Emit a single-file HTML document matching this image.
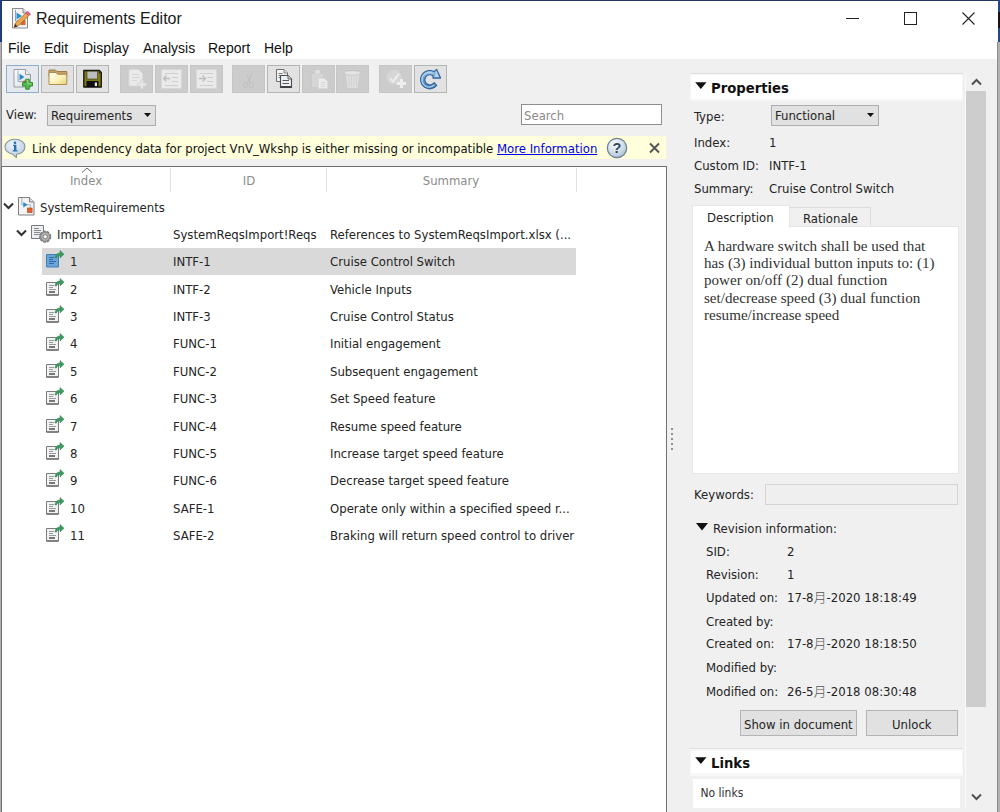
<!DOCTYPE html>
<html><head><meta charset="utf-8"><title>Requirements Editor</title>
<style>
*{box-sizing:border-box;margin:0;padding:0}
html,body{width:1000px;height:812px;overflow:hidden;background:#f0f0f0}
body{position:relative;font-family:"DejaVu Sans Condensed","Liberation Sans",sans-serif;font-size:13px;color:#242424;}
.a{position:absolute;white-space:nowrap}
.t{position:absolute;white-space:nowrap;line-height:16px;height:16px}
#titlebar{left:0;top:0;width:998px;height:59px;background:#fff}
.seg{font-family:"Liberation Sans",sans-serif}
.tb{position:absolute;top:65px;width:33px;height:28px;border:1px solid #b4b4b4;background:#e2e2e2}
.tb.d{background:#cccccc;border-color:#c6c6c6}
.tb.f{background:#e5e9ed;border-color:#8eaecb}
.combo{position:absolute;border:1px solid #adadad;background:#e1e1e1;height:21px}
#tree{left:1px;top:166px;width:666px;height:650px;background:#fff;border:1px solid #707070}
.hd{color:#8c8c8c}
.sep{position:absolute;top:168px;width:1px;height:24px;background:#e3e3e3}
.serif{font-family:"Liberation Serif",serif}
</style></head><body>
<div class="a" id="titlebar"></div>
<div class="a" style="left:0;top:0;width:1000px;height:1px;background:#24365f"></div>
<div class="a" style="left:997px;top:42px;width:1px;height:770px;background:#8c8c8c"></div>
<div class="a" style="left:998px;top:42px;width:2px;height:770px;background:#b2b2b2"></div>
<div class="a" style="left:998px;top:0;width:2px;height:42px;background:#1e4a8c"></div>
<div class="a" style="left:998px;top:12px;width:2px;height:16px;background:#1a1010"></div>
<div class="a" style="left:0;top:1px;width:1px;height:811px;background:#b0b0b0"></div>
<div class="a" style="left:0;top:0;width:2px;height:42px;background:#1e3c78"></div>
<div class="a" style="left:1px;top:42px;width:1px;height:124px;background:#8a8a8a"></div>
<svg class="a" style="left:11px;top:7px" width="21" height="22" viewBox="0 0 21 22">
<path d="M1.500 1.500h10.500l4.500 4.500v15h-15z" fill="#f6f6f6" stroke="#8a8a8a"/>
<path d="M12 1.500v4.500h4.500" fill="#dcdcdc" stroke="#8a8a8a"/>
<path d="M5.500 5.500l5.500 3.500-5.500 3.500z" fill="#2f8fd4"/>
<path d="M4.500 3v11h3" fill="none" stroke="#7fa3c8" stroke-width="1"/>
<rect x="9.500" y="13" width="5" height="5" fill="#e0602e"/>
<path d="M3.200 20.300l1.200-4.300 10.500-10 2.900 2.800-10.500 10z" fill="#e8a850" stroke="#a06a28" stroke-width=".8"/>
<path d="M14.900 6l1.800-1.700 2.900 2.800-1.800 1.700z" fill="#e8609a" stroke="#b84a78" stroke-width=".6"/>
<path d="M3.200 20.300l.9-3.200 2.400 2.300z" fill="#3a2a1a"/>
</svg>
<div class="t seg" style="left:36px;top:9px;font-size:16px;line-height:20px;height:20px;color:#1a1a1a">Requirements Editor</div>
<svg class="a" style="left:840px;top:6px" width="150" height="26" viewBox="0 0 150 26">
<path d="M6 12.500h13" stroke="#222" stroke-width="1"/>
<rect x="64.500" y="6.500" width="12" height="12" fill="none" stroke="#222" stroke-width="1"/>
<path d="M122.500 6.500l12 12M134.500 6.500l-12 12" stroke="#222" stroke-width="1.100"/>
</svg>
<div class="t seg" style="left:8px;top:40px;font-size:14px;color:#111">File</div>
<div class="t seg" style="left:44px;top:40px;font-size:14px;color:#111">Edit</div>
<div class="t seg" style="left:83px;top:40px;font-size:14px;color:#111">Display</div>
<div class="t seg" style="left:143px;top:40px;font-size:14px;color:#111">Analysis</div>
<div class="t seg" style="left:208px;top:40px;font-size:14px;color:#111">Report</div>
<div class="t seg" style="left:264px;top:40px;font-size:14px;color:#111">Help</div>
<div class="tb f" style="left:6px"><svg width="31" height="26" viewBox="0 0 31 26" style="position:absolute;left:0;top:0"><defs><linearGradient id="gpg" x1="0" y1="0" x2="1" y2="1"><stop offset="0" stop-color="#fff"/><stop offset="1" stop-color="#d4dae0"/></linearGradient></defs>
<path d="M7 3.500h11.500l5 5v12.500h-16.500z" fill="url(#gpg)" stroke="#9a9ea3"/>
<path d="M18.500 3.500v5h5" fill="#eceff2" stroke="#9a9ea3"/>
<path d="M12.500 7.800l5 3.200-5 3.200z" fill="#2b87cf"/>
<path d="M11 4.500v11h6.500v2" fill="none" stroke="#8fa9c4" stroke-width="1"/>
<rect x="16.500" y="14.500" width="2.500" height="2.500" fill="#d9582b"/>
<path d="M15.500 16.500h3.200v-3.200h3.600v3.200h3.200v3.600h-3.200v3.200h-3.600v-3.200h-3.200z" fill="#52bb4c" stroke="#2f8a2d" stroke-width=".9" stroke-linejoin="round"/>
<path d="M19.500 14.500h1.200v3.200h3v1" fill="none" stroke="#a6e09f" stroke-width=".8"/></svg></div>
<div class="tb " style="left:41px"><svg width="31" height="26" viewBox="0 0 31 26" style="position:absolute;left:0;top:0"><defs><linearGradient id="gfo" x1="0" y1="0" x2="1" y2="1"><stop offset="0" stop-color="#fffff4"/><stop offset=".55" stop-color="#fbf2b8"/><stop offset="1" stop-color="#e6cf7c"/></linearGradient></defs>
<path d="M7 4h6.500l1.500 1.500h9.800v5h-17.800z" fill="#c4a264" stroke="#9c7e45" stroke-width="1" stroke-linejoin="round"/>
<path d="M7 6.500h7l1.500 1.800h9.300v10.200h-17.800z" fill="url(#gfo)" stroke="#b08d4e" stroke-width="1" stroke-linejoin="round"/></svg></div>
<div class="tb " style="left:76px"><svg width="31" height="26" viewBox="0 0 31 26" style="position:absolute;left:0;top:0"><path d="M6.800 4.500h15.500l2 2v14.500h-17.500z" fill="#7d7a12" stroke="#15150c" stroke-width="1.300" stroke-linejoin="round"/>
<rect x="10" y="5.200" width="10.500" height="7.800" fill="#bdbdbd" stroke="#3a3a20" stroke-width=".6"/>
<rect x="9.500" y="15" width="12" height="6" fill="#0d0d0d"/>
<rect x="17.800" y="16.500" width="2.200" height="3.600" fill="#e8e8e8"/>
<rect x="22" y="6" width="1.200" height="1.500" fill="#222"/></svg></div>
<div class="tb d" style="left:120px"><svg width="31" height="26" viewBox="0 0 31 26" style="position:absolute;left:0;top:0"><path d="M8 3.500h9.500l4 4v12.500h-13.500z" fill="#eaeaea" stroke="#d8d8d8" stroke-width=".8"/>
<path d="M11 8.500h7M11 11.500h8M11 14.500h5" stroke="#d6d6d6" stroke-width="1"/>
<path d="M16.500 17h3v-3h3v3h3v3h-3v3h-3v-3h-3z" fill="#e6e6e6" stroke="#cacaca" stroke-width=".5"/></svg></div>
<div class="tb d" style="left:155px"><svg width="31" height="26" viewBox="0 0 31 26" style="position:absolute;left:0;top:0"><rect x="5.500" y="3.500" width="20" height="19" fill="#eaeaea" stroke="#d8d8d8" stroke-width=".8"/>
<path d="M9 7.500h13M16 11.500h6M16 15.500h6M9 19.500h13" stroke="#cfcfcf" stroke-width="1"/>
<path d="M14 12.500h-6M10.500 9.500l-3 3 3 3" stroke="#bdbdbd" stroke-width="1.300" fill="none"/></svg></div>
<div class="tb d" style="left:190px"><svg width="31" height="26" viewBox="0 0 31 26" style="position:absolute;left:0;top:0"><rect x="5.500" y="3.500" width="20" height="19" fill="#eaeaea" stroke="#d8d8d8" stroke-width=".8"/>
<path d="M9 7.500h13M16 11.500h6M16 15.500h6M9 19.500h13" stroke="#cfcfcf" stroke-width="1"/>
<path d="M8 12.500h6M11.500 9.500l3 3-3 3" stroke="#bdbdbd" stroke-width="1.300" fill="none"/></svg></div>
<div class="tb d" style="left:232px"><svg width="31" height="26" viewBox="0 0 31 26" style="position:absolute;left:0;top:0"><path d="M19.500 5.500l-5 12M14 9l3 8" stroke="#c0c0c0" stroke-width="1" fill="none"/>
<ellipse cx="12.500" cy="19" rx="2" ry="2.800" fill="none" stroke="#c0c0c0" stroke-width="1"/>
<ellipse cx="18.500" cy="19" rx="2" ry="2.800" fill="none" stroke="#c0c0c0" stroke-width="1"/></svg></div>
<div class="tb " style="left:267px"><svg width="31" height="26" viewBox="0 0 31 26" style="position:absolute;left:0;top:0"><path d="M8.500 3.500h7.500l3.500 3.500v8.500h-11z" fill="#f4f4f4" stroke="#6e6e6e" stroke-width="1"/>
<path d="M16 3.500v3.500h3.500" fill="#ddd" stroke="#6e6e6e" stroke-width=".8"/>
<path d="M10.500 7.500h4M10.500 9.500h5M10.500 11.500h3" stroke="#777" stroke-width="1"/>
<path d="M12.500 9.500h7.500l3.500 3.500v8.500h-11z" fill="#eaf0f4" stroke="#4c4c4c" stroke-width="1.100"/>
<path d="M20 9.500v3.500h3.500" fill="#d8d8d8" stroke="#4c4c4c" stroke-width=".8"/>
<path d="M14.500 14.500h6.500M14.500 17.500h6.500" stroke="#5a5a5a" stroke-width="1.200"/>
<path d="M13 20.800h10" stroke="#333" stroke-width="1.400"/></svg></div>
<div class="tb d" style="left:302px"><svg width="31" height="26" viewBox="0 0 31 26" style="position:absolute;left:0;top:0"><path d="M8.500 7.500h12v14h-12z" fill="#d6d6d6" stroke="#c8c8c8" stroke-width=".8"/>
<path d="M12 4h5v4h-5z" fill="#e2e2e2" stroke="#d0d0d0" stroke-width=".6"/>
<path d="M15.500 12.500h6l3 3v7h-9z" fill="#ececec" stroke="#d8d8d8" stroke-width=".7"/>
<path d="M17.500 16.500h5M17.500 18.500h5M17.500 20.500h5" stroke="#d4d4d4" stroke-width=".8"/></svg></div>
<div class="tb d" style="left:336px"><svg width="31" height="26" viewBox="0 0 31 26" style="position:absolute;left:0;top:0"><path d="M8 7.500c0-2 15-2 15 0l-2 15h-11z" fill="#dedede" stroke="#c6c6c6" stroke-width=".8"/>
<ellipse cx="15.500" cy="7" rx="8.500" ry="2.300" fill="#e4e4e4" stroke="#c2c2c2" stroke-width=".8"/>
<path d="M12 10.500v10M14.500 10.500v10M17 10.500v10M19.500 10.500v10" stroke="#cfcfcf" stroke-width=".9"/></svg></div>
<div class="tb d" style="left:379px"><svg width="31" height="26" viewBox="0 0 31 26" style="position:absolute;left:0;top:0"><circle cx="14" cy="11" r="7.500" fill="#d6d6d6"/>
<path d="M10 12.500l3 3.200 6-8" stroke="#ececec" stroke-width="2" fill="none"/>
<path d="M18 17h3v-3h3v3h3v3h-3v3h-3v-3h-3z" transform="translate(-1,-1)" fill="#efefef"/></svg></div>
<div class="tb " style="left:414px"><svg width="31" height="26" viewBox="0 0 31 26" style="position:absolute;left:0;top:0"><g transform="translate(.6,0)"><defs><linearGradient id="grf" x1="0" y1="0" x2="0" y2="1"><stop offset="0" stop-color="#a3c8e8"/><stop offset=".6" stop-color="#5f97cc"/><stop offset="1" stop-color="#3a72ae"/></linearGradient></defs>
<path d="M18.500 5.600A9.200 9.200 0 1 0 21.250 19.500L18.600 16.600A5.100 5.100 0 1 1 17.400 9.770L17.400 12.100L25 12.100L21 3.300Z" fill="url(#grf)" stroke="#2f619a" stroke-width="1.100" stroke-linejoin="round"/>
<path d="M17 7.300A7.300 7.300 0 1 0 18.800 18.800" fill="none" stroke="#bcd9f0" stroke-width="1.300" opacity=".85"/>
<path d="M20.700 5.500l2.700 5.600h-4.500z" fill="#c4dff3" opacity=".8"/></g></svg></div>
<div class="t" style="left:6px;top:107.2px;">View:</div>
<div class="combo" style="left:47px;top:105px;width:109px"><div class="t" style="left:3px;top:1.500px">Requirements</div><svg class="a" style="right:4px;top:7px" width="7" height="4"><path d="M0 0h7l-3.500 4z" fill="#111"/></svg></div>
<div class="a" style="left:521px;top:104px;width:141px;height:21px;background:#fff;border:1px solid #8e8e8e"><div class="t" style="left:2px;top:2.600px;color:#8a8a8a">Search</div></div>
<div class="a" style="left:3px;top:136px;width:662.500px;height:23px;background:#ffffdc"></div>
<svg class="a" style="left:4px;top:138px" width="22" height="21" viewBox="0 0 22 21">
<defs><radialGradient id="ginf" cx=".4" cy=".3" r=".8"><stop offset="0" stop-color="#f0f5fa"/><stop offset="1" stop-color="#b4c9dc"/></radialGradient></defs>
<path d="M11 1.200c5.600 0 10 3.300 10 7.600 0 3.900-3.600 6.900-8.300 7.500l-.3 3.300-3.400-3.300c-4.600-.7-8-3.700-8-7.500 0-4.300 4.400-7.600 10-7.600z" fill="url(#ginf)" stroke="#86939f" stroke-width="1.100" stroke-linejoin="round"/>
<circle cx="11" cy="4.800" r="1.350" fill="#2a70b8"/>
<path d="M9 6.800h3.400v5.400h1.200v1.200h-5v-1.200h1.400v-4.200h-1z" fill="#2a70b8"/>
</svg>
<div class="t" style="left:32px;top:140.9px;color:#111">Link dependency data for project VnV_Wkshp is either missing or incompatible <span style="color:#0000ee;text-decoration:underline">More Information</span></div>
<svg class="a" style="left:606px;top:137px" width="22" height="22" viewBox="0 0 22 22">
<defs><radialGradient id="ghlp" cx=".4" cy=".3" r=".8"><stop offset="0" stop-color="#fbfdff"/><stop offset=".7" stop-color="#c3d3e3"/><stop offset="1" stop-color="#8ea6c0"/></radialGradient></defs>
<circle cx="11" cy="11" r="9.700" fill="url(#ghlp)" stroke="#6f8196" stroke-width="1.200"/>
<text x="11" y="16.200" text-anchor="middle" font-family="Liberation Sans, sans-serif" font-weight="bold" font-size="14.500" fill="#33475c">?</text>
</svg>
<svg class="a" style="left:648px;top:142px" width="13" height="12" viewBox="0 0 13 12"><path d="M2 1.500l9 9M11 1.500l-9 9" stroke="#555" stroke-width="2"/></svg>
<div class="a" id="tree"></div>
<div class="sep" style="left:170px"></div><div class="sep" style="left:326px"></div><div class="sep" style="left:576px"></div>
<svg class="a" style="left:81px;top:167px" width="12" height="6" viewBox="0 0 12 6"><path d="M1 5.500l5-4.500 5 4.500" fill="none" stroke="#6a6a6a" stroke-width="1"/></svg>
<div class="t hd" style="left:36px;width:100px;text-align:center;top:172.9px">Index</div>
<div class="t hd" style="left:199px;width:100px;text-align:center;top:172.9px">ID</div>
<div class="t hd" style="left:401px;width:100px;text-align:center;top:172.9px">Summary</div>
<div class="a" style="left:42px;top:247.500px;width:534px;height:27px;background:#d9d9d9"></div>
<svg class="a" style="left:3px;top:202px" width="11" height="8" viewBox="0 0 11 8"><path d="M1 1.500l4.500 4.500 4.500-4.500" fill="none" stroke="#333" stroke-width="2.100"/></svg>
<svg class="a" style="left:17px;top:196px" width="20" height="20" viewBox="0 0 20 20">
<path d="M1.500 1.500h11l4.500 4.500v13h-15.500z" fill="#f3f3f3" stroke="#7f7f7f"/><path d="M12.500 1.500v4.500h4.500" fill="#dedede" stroke="#7f7f7f"/>
<path d="M4.800 2v6.800h8.500v3.500" fill="none" stroke="#9fb2c6" stroke-width="1"/>
<path d="M6.300 6l4.200 2.700-4.200 2.700z" fill="#2b87cf"/>
<rect x="10.500" y="12" width="4.600" height="4.600" fill="#e0602e" stroke="#b3401a" stroke-width=".6"/></svg>
<div class="t" style="left:40px;top:199.6px;">SystemRequirements</div>
<svg class="a" style="left:16px;top:229px" width="11" height="8" viewBox="0 0 11 8"><path d="M1 1.500l4.500 4.500 4.500-4.500" fill="none" stroke="#333" stroke-width="2.100"/></svg>
<svg class="a" style="left:31px;top:224px" width="22" height="20" viewBox="0 0 22 20">
<path d="M.5 1.500h12v13h-12z" fill="#eceff1" stroke="#7a7a7a"/><path d="M3 4.500h5M3 6.500h7M3 8.500h6M3 10.500h7" stroke="#8a8a8a" stroke-width="1"/>
<circle cx="14.200" cy="12.700" r="5.300" fill="#b4b4b4" stroke="#7c7c7c" stroke-width="1.600" stroke-dasharray="2.600 1.100"/>
<circle cx="14.200" cy="12.700" r="4.700" fill="#b0b0b0" stroke="#808080" stroke-width="1"/><circle cx="14.200" cy="12.700" r="2.100" fill="#f6f6f6" stroke="#777" stroke-width=".9"/></svg>
<div class="t" style="left:57px;top:226.97px;">Import1</div>
<div class="t" style="left:173px;top:226.97px;">SystemReqsImport!Reqs</div>
<div class="t" style="left:330px;top:226.97px;">References to SystemReqsImport.xlsx (...</div>
<svg class="a" style="left:46px;top:250px" width="19" height="18" viewBox="0 0 19 18"><path d="M.5 4.500h12v12.500h-12z" fill="#6aa5d8" stroke="#3f7fb8"/><path d="M3 7.500h5M3 9.500h4M3 11.500h7M3 13.500h5" stroke="#2f6aa3" stroke-width="1"/><path d="M9 8c.3-3.500 2.300-5 5-5v-2.500l4 3.700-4 3.700v-2.500c-1.800 0-3 .8-3.500 2.600z" fill="#3c9a5f" stroke="#2e8050" stroke-width=".5"/></svg>
<div class="t" style="left:70px;top:254.34px;">1</div>
<div class="t" style="left:173px;top:254.34px;">INTF-1</div>
<div class="t" style="left:330px;top:254.34px;">Cruise Control Switch</div>
<svg class="a" style="left:46px;top:278px" width="19" height="18" viewBox="0 0 19 18"><path d="M.5 4.500h12v12.500h-12z" fill="#f0f2f4" stroke="#7c7c7c"/><path d="M.5 17h12" stroke="#4a4a4a"/><path d="M3 7.500h5M3 9.500h4M3 11.500h7" stroke="#9a9a9a" stroke-width="1"/><path d="M3 14h6" stroke="#444" stroke-width="1.400"/><path d="M9 8c.3-3.500 2.300-5 5-5v-2.500l4 3.700-4 3.700v-2.500c-1.800 0-3 .8-3.500 2.600z" fill="#3c9a5f" stroke="#2e8050" stroke-width=".5"/></svg>
<div class="t" style="left:70px;top:281.71px;">2</div>
<div class="t" style="left:173px;top:281.71px;">INTF-2</div>
<div class="t" style="left:330px;top:281.71px;">Vehicle Inputs</div>
<svg class="a" style="left:46px;top:305px" width="19" height="18" viewBox="0 0 19 18"><path d="M.5 4.500h12v12.500h-12z" fill="#f0f2f4" stroke="#7c7c7c"/><path d="M.5 17h12" stroke="#4a4a4a"/><path d="M3 7.500h5M3 9.500h4M3 11.500h7" stroke="#9a9a9a" stroke-width="1"/><path d="M3 14h6" stroke="#444" stroke-width="1.400"/><path d="M9 8c.3-3.500 2.300-5 5-5v-2.500l4 3.700-4 3.700v-2.500c-1.800 0-3 .8-3.500 2.600z" fill="#3c9a5f" stroke="#2e8050" stroke-width=".5"/></svg>
<div class="t" style="left:70px;top:309.08px;">3</div>
<div class="t" style="left:173px;top:309.08px;">INTF-3</div>
<div class="t" style="left:330px;top:309.08px;">Cruise Control Status</div>
<svg class="a" style="left:46px;top:333px" width="19" height="18" viewBox="0 0 19 18"><path d="M.5 4.500h12v12.500h-12z" fill="#f0f2f4" stroke="#7c7c7c"/><path d="M.5 17h12" stroke="#4a4a4a"/><path d="M3 7.500h5M3 9.500h4M3 11.500h7" stroke="#9a9a9a" stroke-width="1"/><path d="M3 14h6" stroke="#444" stroke-width="1.400"/><path d="M9 8c.3-3.500 2.300-5 5-5v-2.500l4 3.700-4 3.700v-2.500c-1.800 0-3 .8-3.500 2.600z" fill="#3c9a5f" stroke="#2e8050" stroke-width=".5"/></svg>
<div class="t" style="left:70px;top:336.45px;">4</div>
<div class="t" style="left:173px;top:336.45px;">FUNC-1</div>
<div class="t" style="left:330px;top:336.45px;">Initial engagement</div>
<svg class="a" style="left:46px;top:360px" width="19" height="18" viewBox="0 0 19 18"><path d="M.5 4.500h12v12.500h-12z" fill="#f0f2f4" stroke="#7c7c7c"/><path d="M.5 17h12" stroke="#4a4a4a"/><path d="M3 7.500h5M3 9.500h4M3 11.500h7" stroke="#9a9a9a" stroke-width="1"/><path d="M3 14h6" stroke="#444" stroke-width="1.400"/><path d="M9 8c.3-3.500 2.300-5 5-5v-2.500l4 3.700-4 3.700v-2.500c-1.800 0-3 .8-3.500 2.600z" fill="#3c9a5f" stroke="#2e8050" stroke-width=".5"/></svg>
<div class="t" style="left:70px;top:363.82px;">5</div>
<div class="t" style="left:173px;top:363.82px;">FUNC-2</div>
<div class="t" style="left:330px;top:363.82px;">Subsequent engagement</div>
<svg class="a" style="left:46px;top:387px" width="19" height="18" viewBox="0 0 19 18"><path d="M.5 4.500h12v12.500h-12z" fill="#f0f2f4" stroke="#7c7c7c"/><path d="M.5 17h12" stroke="#4a4a4a"/><path d="M3 7.500h5M3 9.500h4M3 11.500h7" stroke="#9a9a9a" stroke-width="1"/><path d="M3 14h6" stroke="#444" stroke-width="1.400"/><path d="M9 8c.3-3.500 2.300-5 5-5v-2.500l4 3.700-4 3.700v-2.500c-1.800 0-3 .8-3.500 2.600z" fill="#3c9a5f" stroke="#2e8050" stroke-width=".5"/></svg>
<div class="t" style="left:70px;top:391.19px;">6</div>
<div class="t" style="left:173px;top:391.19px;">FUNC-3</div>
<div class="t" style="left:330px;top:391.19px;">Set Speed feature</div>
<svg class="a" style="left:46px;top:415px" width="19" height="18" viewBox="0 0 19 18"><path d="M.5 4.500h12v12.500h-12z" fill="#f0f2f4" stroke="#7c7c7c"/><path d="M.5 17h12" stroke="#4a4a4a"/><path d="M3 7.500h5M3 9.500h4M3 11.500h7" stroke="#9a9a9a" stroke-width="1"/><path d="M3 14h6" stroke="#444" stroke-width="1.400"/><path d="M9 8c.3-3.500 2.300-5 5-5v-2.500l4 3.700-4 3.700v-2.500c-1.800 0-3 .8-3.500 2.600z" fill="#3c9a5f" stroke="#2e8050" stroke-width=".5"/></svg>
<div class="t" style="left:70px;top:418.56px;">7</div>
<div class="t" style="left:173px;top:418.56px;">FUNC-4</div>
<div class="t" style="left:330px;top:418.56px;">Resume speed feature</div>
<svg class="a" style="left:46px;top:442px" width="19" height="18" viewBox="0 0 19 18"><path d="M.5 4.500h12v12.500h-12z" fill="#f0f2f4" stroke="#7c7c7c"/><path d="M.5 17h12" stroke="#4a4a4a"/><path d="M3 7.500h5M3 9.500h4M3 11.500h7" stroke="#9a9a9a" stroke-width="1"/><path d="M3 14h6" stroke="#444" stroke-width="1.400"/><path d="M9 8c.3-3.500 2.300-5 5-5v-2.500l4 3.700-4 3.700v-2.500c-1.800 0-3 .8-3.500 2.600z" fill="#3c9a5f" stroke="#2e8050" stroke-width=".5"/></svg>
<div class="t" style="left:70px;top:445.93px;">8</div>
<div class="t" style="left:173px;top:445.93px;">FUNC-5</div>
<div class="t" style="left:330px;top:445.93px;">Increase target speed feature</div>
<svg class="a" style="left:46px;top:469px" width="19" height="18" viewBox="0 0 19 18"><path d="M.5 4.500h12v12.500h-12z" fill="#f0f2f4" stroke="#7c7c7c"/><path d="M.5 17h12" stroke="#4a4a4a"/><path d="M3 7.500h5M3 9.500h4M3 11.500h7" stroke="#9a9a9a" stroke-width="1"/><path d="M3 14h6" stroke="#444" stroke-width="1.400"/><path d="M9 8c.3-3.500 2.300-5 5-5v-2.500l4 3.700-4 3.700v-2.500c-1.800 0-3 .8-3.500 2.600z" fill="#3c9a5f" stroke="#2e8050" stroke-width=".5"/></svg>
<div class="t" style="left:70px;top:473.3px;">9</div>
<div class="t" style="left:173px;top:473.3px;">FUNC-6</div>
<div class="t" style="left:330px;top:473.3px;">Decrease target speed feature</div>
<svg class="a" style="left:46px;top:497px" width="19" height="18" viewBox="0 0 19 18"><path d="M.5 4.500h12v12.500h-12z" fill="#f0f2f4" stroke="#7c7c7c"/><path d="M.5 17h12" stroke="#4a4a4a"/><path d="M3 7.500h5M3 9.500h4M3 11.500h7" stroke="#9a9a9a" stroke-width="1"/><path d="M3 14h6" stroke="#444" stroke-width="1.400"/><path d="M9 8c.3-3.500 2.300-5 5-5v-2.500l4 3.700-4 3.700v-2.500c-1.800 0-3 .8-3.500 2.600z" fill="#3c9a5f" stroke="#2e8050" stroke-width=".5"/></svg>
<div class="t" style="left:70px;top:500.67px;">10</div>
<div class="t" style="left:173px;top:500.67px;">SAFE-1</div>
<div class="t" style="left:330px;top:500.67px;">Operate only within a specified speed r...</div>
<svg class="a" style="left:46px;top:524px" width="19" height="18" viewBox="0 0 19 18"><path d="M.5 4.500h12v12.500h-12z" fill="#f0f2f4" stroke="#7c7c7c"/><path d="M.5 17h12" stroke="#4a4a4a"/><path d="M3 7.500h5M3 9.500h4M3 11.500h7" stroke="#9a9a9a" stroke-width="1"/><path d="M3 14h6" stroke="#444" stroke-width="1.400"/><path d="M9 8c.3-3.500 2.300-5 5-5v-2.500l4 3.700-4 3.700v-2.500c-1.800 0-3 .8-3.500 2.600z" fill="#3c9a5f" stroke="#2e8050" stroke-width=".5"/></svg>
<div class="t" style="left:70px;top:528.04px;">11</div>
<div class="t" style="left:173px;top:528.04px;">SAFE-2</div>
<div class="t" style="left:330px;top:528.04px;">Braking will return speed control to driver</div>
<svg class="a" style="left:670px;top:427px" width="4" height="24" viewBox="0 0 4 24"><g fill="#8f8f8f"><rect x="1" y="1" width="2" height="2"/><rect x="1" y="6" width="2" height="2"/><rect x="1" y="11" width="2" height="2"/><rect x="1" y="16" width="2" height="2"/><rect x="1" y="21" width="2" height="2"/></g></svg>
<div class="a" style="left:690px;top:73px;width:273px;height:28px;background:#f7f7f7;border-top:1px solid #dedede"></div>
<div class="a" style="left:691px;top:75px;width:271px;height:23.500px;background:#fff"></div>
<svg class="a" style="left:695px;top:82px" width="12" height="8"><path d="M.2 .3h11.300l-5.650 6.600z" fill="#111"/></svg>
<div class="t" style="left:711px;top:78.500px;font-weight:bold;font-size:14.700px;line-height:18px;height:18px;color:#111">Properties</div>
<div class="t" style="left:694px;top:108.9px;">Type:</div>
<div class="combo" style="left:771px;top:105px;width:108px"><div class="t" style="left:3px;top:2px">Functional</div><svg class="a" style="right:4px;top:7px" width="7" height="4"><path d="M0 0h7l-3.500 4z" fill="#111"/></svg></div>
<div class="t" style="left:694px;top:135.1px;">Index:</div>
<div class="t" style="left:769px;top:135.1px;">1</div>
<div class="t" style="left:694px;top:158.1px;">Custom ID:</div>
<div class="t" style="left:769px;top:158.1px;">INTF-1</div>
<div class="t" style="left:694px;top:181.1px;">Summary:</div>
<div class="t" style="left:769px;top:181.1px;">Cruise Control Switch</div>
<div class="a" style="left:789px;top:207px;width:82px;height:21px;border:1px solid #dcdcdc;border-bottom:none;background:#f0f0f0"></div>
<div class="a" style="left:692px;top:226px;width:267px;height:248px;background:#fff;border:1px solid #e6e6e6"></div>
<div class="a" style="left:692px;top:205px;width:98px;height:23px;background:#fff;border:1px solid #e6e6e6;border-bottom:none"></div>
<div class="t" style="left:707px;top:209.500px">Description</div><div class="t" style="left:803px;top:210.500px">Rationale</div>
<div class="a serif" style="left:704px;top:237.500px;width:256px;font-size:15.100px;line-height:17.400px;color:#333;white-space:normal">A hardware switch shall be used that<br>has (3) individual button inputs to: (1)<br>power on/off (2) dual function<br>set/decrease speed (3) dual function<br>resume/increase speed</div>
<div class="t" style="left:694px;top:487.2px;">Keywords:</div>
<div class="a" style="left:765px;top:484px;width:193px;height:21px;background:#efefef;border:1px solid #d4d4d4"></div>
<svg class="a" style="left:696px;top:523px" width="13" height="8"><path d="M0 0h12l-6 7.500z" fill="#111"/></svg>
<div class="t" style="left:713px;top:521.4px;">Revision information:</div>
<div class="t" style="left:706px;top:544px">SID:</div>
<div class="t" style="left:787px;top:544px;font-family:'DejaVu Sans Condensed','Liberation Sans','Noto Sans CJK SC',sans-serif">2</div>
<div class="t" style="left:706px;top:567px">Revision:</div>
<div class="t" style="left:787px;top:567px;font-family:'DejaVu Sans Condensed','Liberation Sans','Noto Sans CJK SC',sans-serif">1</div>
<div class="t" style="left:706px;top:590px">Updated on:</div>
<div class="t" style="left:787px;top:590px;font-family:'DejaVu Sans Condensed','Liberation Sans','Noto Sans CJK SC',sans-serif">17-8<span style="font-weight:300;color:#555">月</span>-2020 18:18:49</div>
<div class="t" style="left:706px;top:614px">Created by:</div>
<div class="t" style="left:706px;top:636px">Created on:</div>
<div class="t" style="left:787px;top:636px;font-family:'DejaVu Sans Condensed','Liberation Sans','Noto Sans CJK SC',sans-serif">17-8<span style="font-weight:300;color:#555">月</span>-2020 18:18:50</div>
<div class="t" style="left:706px;top:660px">Modified by:</div>
<div class="t" style="left:706px;top:684px">Modified on:</div>
<div class="t" style="left:787px;top:684px;font-family:'DejaVu Sans Condensed','Liberation Sans','Noto Sans CJK SC',sans-serif">26-5<span style="font-weight:300;color:#555">月</span>-2018 08:30:48</div>
<div class="a" style="left:740px;top:710px;width:117px;height:26px;background:#e1e1e1;border:1px solid #b4b4b4"></div>
<div class="a" style="left:866px;top:710px;width:92px;height:26px;background:#e1e1e1;border:1px solid #b4b4b4"></div>
<div class="t" style="left:744px;top:717.1px;">Show in document</div>
<div class="t" style="left:892px;top:717.1px;">Unlock</div>
<div class="a" style="left:690px;top:748px;width:273px;height:28px;background:#f7f7f7;border-top:1px solid #dedede"></div>
<div class="a" style="left:691px;top:751px;width:271px;height:22px;background:#fff"></div>
<svg class="a" style="left:695px;top:757px" width="12" height="8"><path d="M.2 .3h11.300l-5.650 6.600z" fill="#111"/></svg>
<div class="t" style="left:711px;top:753.500px;font-weight:bold;font-size:14.700px;line-height:18px;height:18px;color:#111">Links</div>
<div class="a" style="left:693px;top:778.500px;width:267px;height:29px;background:#fff"></div>
<div class="t" style="left:700.500px;top:785px;font-size:12px;color:#333">No links</div>
<div class="a" style="left:965px;top:73px;width:1px;height:735px;background:#fafafa"></div>
<div class="a" style="left:966px;top:91px;width:20px;height:616px;background:#cdcdcd"></div>
<svg class="a" style="left:971px;top:78px" width="11" height="8" viewBox="0 0 11 8"><path d="M1 6.500l4.500-4.500 4.500 4.500" fill="none" stroke="#505050" stroke-width="2"/></svg>
<svg class="a" style="left:971px;top:793px" width="11" height="8" viewBox="0 0 11 8"><path d="M1 1.500l4.500 4.500 4.500-4.500" fill="none" stroke="#505050" stroke-width="2"/></svg>
</body></html>
